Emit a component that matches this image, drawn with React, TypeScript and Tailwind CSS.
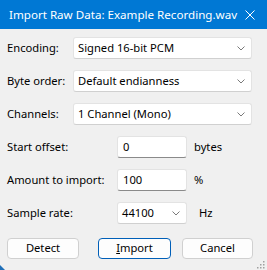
import React from "react";

function Chevron() {
  return (
    <svg width="8" height="5" viewBox="0 0 8 5" className="shrink-0">
      <path d="M0.5 0.5 L4 4 L7.5 0.5" fill="none" stroke="#6b6b6b" strokeWidth="0.9" />
    </svg>
  );
}

function Combo({ value, className = "" }: { value: string; className?: string }) {
  return (
    <div
      className={`h-[22px] flex items-center justify-between bg-white border border-[#e3e3e3] border-b-[#d0d0d0] rounded-[3px] pl-[4px] pr-[6px] ${className}`}
    >
      <span>{value}</span>
      <Chevron />
    </div>
  );
}

function TextBox({ value }: { value: string }) {
  return (
    <div className="w-[70px] h-[22px] flex items-center bg-white border border-[#e3e3e3] border-b-[#8a8a8a] rounded-[3px] pl-[5px]">
      {value}
    </div>
  );
}

function Btn({ children, primary = false, className = "" }: { children: React.ReactNode; primary?: boolean; className?: string }) {
  return (
    <button
      className={`h-[21px] flex items-center justify-center rounded-[4px] bg-[#fdfdfd] border ${
        primary ? "border-[#005fb8]" : "border-[#d0d0d0]"
      } ${className}`}
    >
      {children}
    </button>
  );
}

export default function App() {
  return (
    <div
      className="relative w-[267px] h-[270px] bg-[#f0f0f0] text-[11.2px] text-black overflow-hidden flex flex-col"
      style={{ fontFamily: '"Noto Sans", "Liberation Sans", sans-serif' }}
    >
      <div className="h-[29px] shrink-0 bg-[#0078d4] flex items-center justify-between pl-[9px] pr-[12px] text-white text-[11.6px]">
        <span className="whitespace-nowrap">Import Raw Data: Example Recording.wav</span>
        <svg width="10" height="10" viewBox="0 0 10 10" className="shrink-0">
          <path d="M0.5 0.5 L9.5 9.5 M9.5 0.5 L0.5 9.5" stroke="white" strokeWidth="1" />
        </svg>
      </div>

      <div className="flex flex-col pl-[7px] pt-[8px] gap-[11px]">
        <div className="flex items-center h-[22px]">
          <span className="w-[66px]">Encoding:</span>
          <Combo value="Signed 16-bit PCM" className="w-[179px]" />
        </div>
        <div className="flex items-center h-[22px]">
          <span className="w-[66px]">Byte order:</span>
          <Combo value="Default endianness" className="w-[179px]" />
        </div>
        <div className="flex items-center h-[22px]">
          <span className="w-[66px]">Channels:</span>
          <Combo value="1 Channel (Mono)" className="w-[179px]" />
        </div>
        <div className="flex items-center h-[22px]">
          <span className="w-[110px]">Start offset:</span>
          <TextBox value="0" />
          <span className="ml-[7px]">bytes</span>
        </div>
        <div className="flex items-center h-[22px]">
          <span className="w-[110px]">Amount to import:</span>
          <TextBox value="100" />
          <span className="ml-[7px]">%</span>
        </div>
        <div className="flex items-center h-[22px]">
          <span className="w-[110px]">Sample rate:</span>
          <Combo value="44100" className="w-[70px]" />
          <span className="ml-[12px]">Hz</span>
        </div>
      </div>

      <div className="flex pl-[7px] mt-[14px]">
        <Btn className="w-[72px]">Detect</Btn>
        <Btn primary className="w-[73px] ml-[19px]">
          <span>
            <span className="underline">I</span>mport
          </span>
        </Btn>
        <Btn className="w-[71px] ml-[11px]">Cancel</Btn>
      </div>

      <div className="absolute left-0 bottom-0 w-0 h-0 border-l-[5px] border-l-[#1f6fb8] border-t-[5px] border-t-transparent" />
      <svg className="absolute right-[2px] bottom-[1px]" width="8" height="8" viewBox="0 0 8 8">
        <g fill="#a0a0a0">
          <rect x="6" y="0" width="1.5" height="1.5" />
          <rect x="3" y="3" width="1.5" height="1.5" />
          <rect x="6" y="3" width="1.5" height="1.5" />
          <rect x="0" y="6" width="1.5" height="1.5" />
          <rect x="3" y="6" width="1.5" height="1.5" />
          <rect x="6" y="6" width="1.5" height="1.5" />
        </g>
      </svg>
    </div>
  );
}
